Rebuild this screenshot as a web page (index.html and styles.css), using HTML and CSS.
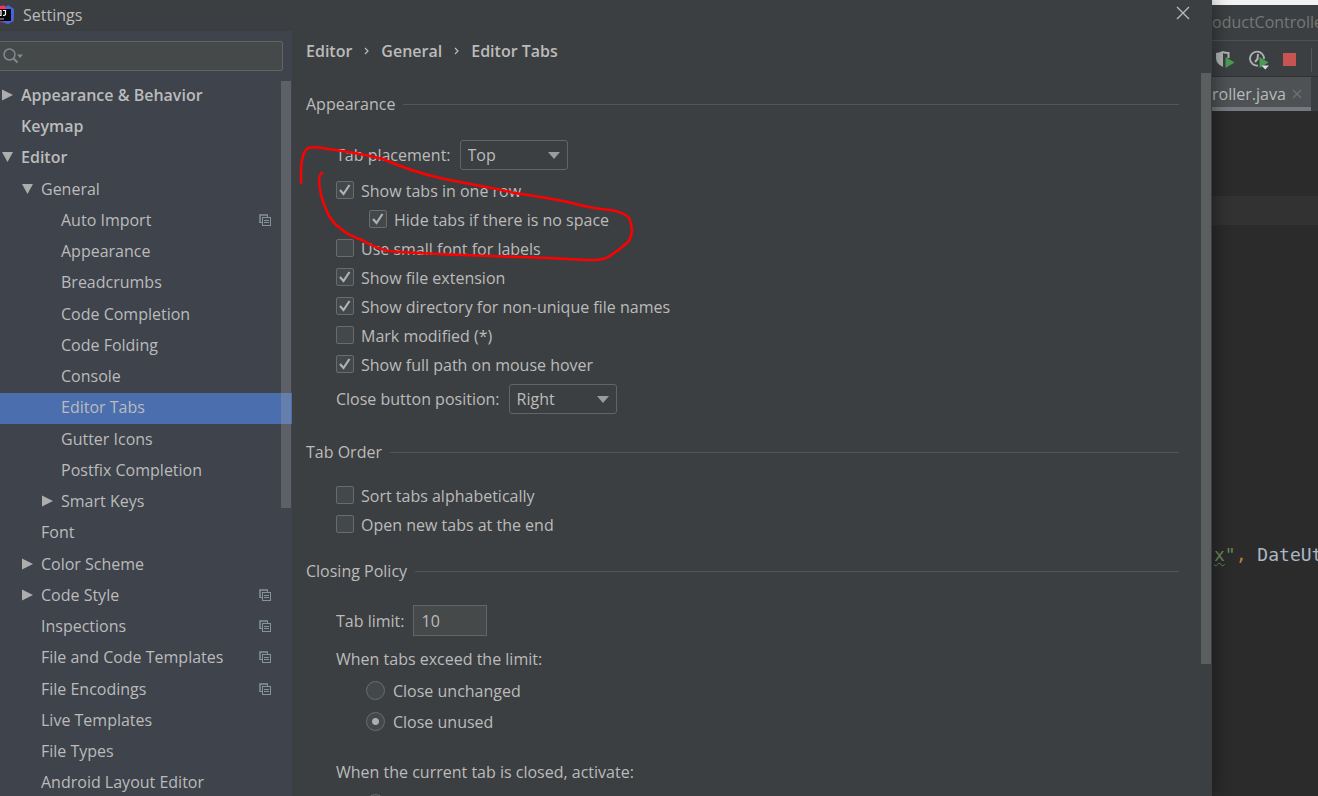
FILE: index.html
```html
<!DOCTYPE html>
<html lang="en">
<head>
  <meta charset="UTF-8">
  <meta name="viewport" content="width=device-width, initial-scale=1.0">
  <title>Settings</title>
  <link rel="stylesheet" href="styles.css">
</head>
<body>

  <!-- shared icon shapes -->
  <svg class="defs" width="0" height="0">
    <symbol id="copy" viewBox="0 0 12 12">
      <path d="M1 9V1H9" fill="none" stroke="#87939a" stroke-width="1.500"/>
      <path d="M1 8.500H3M8.500 1V3" fill="none" stroke="#87939a"/>
      <rect x="3.500" y="3.500" width="8" height="8" fill="#3e434c" stroke="#87939a"/>
      <path d="M5 6.500h5M5 8.500h5" stroke="#87939a"/>
    </symbol>
    <symbol id="right" viewBox="0 0 12 12"><path d="M1 0.500L12 6L1 11.500z" fill="#adadad"/></symbol>
    <symbol id="down" viewBox="0 0 12 12"><path d="M1 1H12L6.500 11z" fill="#adadad"/></symbol>
  </svg>

  <div class="dialog">
    <header class="titlebar">
      <svg class="logo" width="14" height="20" viewBox="0 0 14 20">
        <path d="M0 1L6 1L9 5L14 5L14 16L8 19L0 17z" fill="#7b3fa8"/>
        <path d="M6 2L8 0L14 4L13 16L8 19L4 17z" fill="#3b6be0"/>
        <path d="M0 1L4 0.500L7 4L0 5z" fill="#fe315d"/>
        <rect x="0" y="4" width="11" height="12" fill="#080808"/>
        <path d="M0 5.500H1.500M1 5.500V10.500M0 10.500H1.500M3 5.500H6M5.500 5V9Q5.500 10.500 3 10.500" fill="none" stroke="#fff" stroke-width="1.200"/>
        <path d="M0 14H4" stroke="#bbb"/>
      </svg>
      <span class="title">Settings</span>
      <button class="close" aria-label="Close">
        <svg width="14" height="14" viewBox="0 0 14 14"><path d="M1 1L13 13M13 1L1 13" stroke="#bbb" stroke-width="1.300"/></svg>
      </button>
    </header>

    <div class="columns">
      <aside class="sidebar">
        <div class="search">
          <svg width="20" height="16" viewBox="0 0 20 16">
            <circle cx="6.500" cy="6.500" r="5.500" fill="none" stroke="#7f8b91" stroke-width="1.500"/>
            <path d="M10.500 10.500L14.500 14.500" stroke="#7f8b91" stroke-width="2"/>
            <path d="M14 6.500H20L17 10z" fill="#7f8b91"/>
          </svg>
          <input type="text" aria-label="Search settings">
        </div>
        <ul class="tree">
          <li class="top"><svg class="arrow"><use href="#right"/></svg>Appearance &amp; Behavior</li>
          <li class="top">Keymap</li>
          <li class="top"><svg class="arrow"><use href="#down"/></svg>Editor</li>
          <li class="sub"><svg class="arrow"><use href="#down"/></svg>General</li>
          <li class="leaf">Auto Import<svg class="copy"><use href="#copy"/></svg></li>
          <li class="leaf">Appearance</li>
          <li class="leaf">Breadcrumbs</li>
          <li class="leaf">Code Completion</li>
          <li class="leaf">Code Folding</li>
          <li class="leaf">Console</li>
          <li class="leaf selected">Editor Tabs</li>
          <li class="leaf">Gutter Icons</li>
          <li class="leaf">Postfix Completion</li>
          <li class="leaf"><svg class="arrow"><use href="#right"/></svg>Smart Keys</li>
          <li class="sub">Font</li>
          <li class="sub"><svg class="arrow"><use href="#right"/></svg>Color Scheme</li>
          <li class="sub"><svg class="arrow"><use href="#right"/></svg>Code Style<svg class="copy"><use href="#copy"/></svg></li>
          <li class="sub">Inspections<svg class="copy"><use href="#copy"/></svg></li>
          <li class="sub">File and Code Templates<svg class="copy"><use href="#copy"/></svg></li>
          <li class="sub">File Encodings<svg class="copy"><use href="#copy"/></svg></li>
          <li class="sub">Live Templates</li>
          <li class="sub">File Types</li>
          <li class="sub">Android Layout Editor</li>
        </ul>
        <div class="thumb tree-thumb"></div>
      </aside>

      <main class="panel">
        <nav class="crumbs">
          <span>Editor</span>
          <svg width="5" height="8" viewBox="0 0 5 8"><path d="M1 1L4 4L1 7" fill="none" stroke="#bbb" stroke-width="1.200"/></svg>
          <span>General</span>
          <svg width="5" height="8" viewBox="0 0 5 8"><path d="M1 1L4 4L1 7" fill="none" stroke="#bbb" stroke-width="1.200"/></svg>
          <span>Editor Tabs</span>
        </nav>

        <section>
          <h2>Appearance</h2>
          <div class="group">
            <div class="field">
              <label for="placement">Tab placement:</label>
              <select id="placement"><option>Top</option><option>Bottom</option><option>Left</option></select>
            </div>
            <div class="checks">
              <label class="check"><input type="checkbox" checked>Show tabs in one row</label>
              <label class="check nested"><input type="checkbox" checked>Hide tabs if there is no space</label>
              <label class="check"><input type="checkbox">Use small font for labels</label>
              <label class="check"><input type="checkbox" checked>Show file extension</label>
              <label class="check"><input type="checkbox" checked>Show directory for non-unique file names</label>
              <label class="check"><input type="checkbox">Mark modified (*)</label>
              <label class="check"><input type="checkbox" checked>Show full path on mouse hover</label>
            </div>
            <div class="field">
              <label for="closePos">Close button position:</label>
              <select id="closePos"><option>Right</option><option>Left</option></select>
            </div>
          </div>
        </section>

        <section class="order">
          <h2>Tab Order</h2>
          <div class="group">
            <label class="check"><input type="checkbox">Sort tabs alphabetically</label>
            <label class="check"><input type="checkbox">Open new tabs at the end</label>
          </div>
        </section>

        <section class="closing">
          <h2>Closing Policy</h2>
          <div class="group">
            <div class="field">
              <label for="limit">Tab limit:</label>
              <input type="text" id="limit" value="10">
            </div>
            <p>When tabs exceed the limit:</p>
            <div class="radios">
              <label class="radio"><input type="radio" name="exceed">Close unchanged</label>
              <label class="radio"><input type="radio" name="exceed" checked>Close unused</label>
            </div>
            <p class="next">When the current tab is closed, activate:</p>
            <div class="radios">
              <label class="radio"><input type="radio" name="activate" aria-label="First choice"></label>
            </div>
          </div>
        </section>
        <div class="thumb panel-thumb"></div>

        <!-- red pen mark -->
        <svg class="pen" width="340" height="120" viewBox="0 0 340 120">
          <path d="M3 38V26Q3 16 6 8Q8 4 10 3Q18 1 30 4Q55 7 85 14C110 25 125 29 142 33C165 38 190 42 217 48Q250 53 270 57Q290 63 312 65Q326 67 331 73Q334 79 334 86Q333 93 330 97Q322 104 316 108Q308 116 290 115Q270 114 250 113L165 110Q115 108 90 106Q75 102 64 95Q50 90 43 84Q32 76 28 64Q25 58 23 50Q19 30 24 28" fill="none" stroke="#f00" stroke-width="2.500" stroke-linecap="round" stroke-linejoin="round"/>
        </svg>
      </main>
    </div>
  </div>

  <div class="ide">
    <div class="desktop"></div>
    <div class="ide-title">oductController</div>
    <div class="toolbar">
      <svg width="20" height="20" viewBox="0 0 20 20">
        <path d="M1 3Q5 2.500 8 1V17Q1 14 1 8z" fill="#afb1b3"/>
        <path d="M8 2Q10 3 13.500 3V8" fill="none" stroke="#afb1b3" stroke-width="2"/>
        <path d="M10.500 7L19.500 12.500L10.500 18z" fill="#499c54"/>
      </svg>
      <svg width="20" height="20" viewBox="0 0 20 20">
        <path d="M15 9A7 7 0 1 0 9 15.500" fill="none" stroke="#afb1b3" stroke-width="1.800"/>
        <path d="M9 4L8.500 9L6 12" fill="none" stroke="#afb1b3" stroke-width="2"/>
        <path d="M10.500 7L19.500 12.500L10.500 18z" fill="#499c54"/>
        <path d="M12.500 15.500H20L16.200 19.500z" fill="#ddd"/>
      </svg>
      <svg width="14" height="14" viewBox="0 0 14 14"><rect x="0" y="0" width="13" height="13" fill="#c75450"/></svg>
      <span class="divider"></span>
    </div>
    <div class="tabs">
      <div class="tab">roller.java
        <svg width="10" height="10" viewBox="0 0 10 10"><path d="M1 1L9 9M9 1L1 9" stroke="#6e7376" stroke-width="1.200"/></svg>
      </div>
    </div>
    <div class="code">
      <div class="caret-line"></div>
      <pre><span class="string"><span class="typo">x</span>"</span><span class="comma">,</span> DateUt</pre>
    </div>
  </div>

</body>
</html>
```
FILE: styles.css
```css
* {
  box-sizing: border-box;
}
body {
  margin: 0;
  height: 100vh;
  display: flex;
  overflow: hidden;
  background: #2b2b2b;
  color: #bbb;
  font-family: "Open Sans", "Noto Sans", sans-serif;
  font-size: 16px;
  line-height: 24px;
}
input, select, button {
  font: inherit;
  color: inherit;
  margin: 0;
}
.defs {
  position: absolute;
}

/* dialog */
.dialog {
  flex: 1;
  min-width: 0;
  display: flex;
  flex-direction: column;
  background: #3c3f41;
  position: relative;
  z-index: 1;
  box-shadow: 2px 0 16px rgba(0, 0, 0, 0.4);
}
.titlebar {
  height: 31px;
  display: flex;
  align-items: center;
  padding: 0 22px 2px 0;
}
.title {
  flex: 1;
  margin-left: 9px;
}
.close {
  padding: 0;
  border: 0;
  background: none;
  display: flex;
  margin-bottom: 3px;
}
.columns {
  flex: 1;
  min-height: 0;
  display: flex;
}
.thumb {
  position: absolute;
  right: 1px;
  width: 10px;
  background: rgba(166, 166, 166, 0.3);
}

/* sidebar */
.sidebar {
  width: 292px;
  flex-shrink: 0;
  padding-top: 10px;
  background: #3e434c;
  position: relative;
  overflow: hidden;
}
.search {
  height: 30px;
  margin-right: 9px;
  display: flex;
  align-items: center;
  padding-left: 3px;
  background: #45494a;
  border: 1px solid #646464;
  border-left: 0;
  border-radius: 0 3px 3px 0;
}
.search input {
  flex: 1;
  min-width: 0;
  border: 0;
  background: none;
  outline: none;
}
.tree {
  list-style: none;
  margin: 10px 0 0;
  padding: 0;
}
.tree li {
  height: 31px;
  display: flex;
  align-items: center;
  padding-right: 21px;
  padding-bottom: 3px;
  white-space: nowrap;
}
.tree li:nth-child(4n-1) {
  margin-bottom: 1px;
}
.tree .top {
  padding-left: 21px;
  font-weight: 600;
}
.tree .sub {
  padding-left: 41px;
}
.tree .leaf {
  padding-left: 61px;
}
.tree .selected {
  background: #4b6eaf;
}
.arrow {
  width: 12px;
  height: 12px;
  margin-left: -20px;
  margin-right: 8px;
}
.copy {
  width: 12px;
  height: 12px;
  margin-left: auto;
}
.tree-thumb {
  top: 50px;
  height: 427px;
}

/* settings panel */
.panel {
  flex: 1;
  min-width: 0;
  padding: 8px 33px 0 14px;
  position: relative;
  overflow: hidden;
}
.crumbs {
  display: flex;
  align-items: center;
  gap: 12px;
  font-weight: 600;
  margin-bottom: 29px;
}
h2 {
  display: flex;
  align-items: center;
  gap: 8px;
  margin: 0;
  font-size: 16px;
  font-weight: normal;
}
h2::after {
  content: "";
  flex: 1;
  height: 1px;
  background: #555;
}
section {
  margin-bottom: 26px;
}
.group {
  padding: 24px 0 0 30px;
}
.order {
  margin-bottom: 20px;
}
.order .group {
  padding-top: 17px;
}
.closing .group {
  padding-top: 22px;
}
.field {
  display: flex;
  align-items: center;
  gap: 9px;
}
select {
  width: 108px;
  height: 30px;
  padding: 0 7px;
  appearance: none;
  border: 1px solid #646464;
  border-radius: 3px;
  background: #3c3f41 url("data:image/svg+xml,%3Csvg xmlns='http://www.w3.org/2000/svg' width='12' height='7'%3E%3Cpath d='M0 0H12L6 7z' fill='%239a9da0'/%3E%3C/svg%3E") no-repeat right 7px center;
}
.checks {
  margin: 6px 0 5px;
}
.check, .radio {
  display: flex;
  align-items: center;
  height: 29px;
  gap: 7px;
}
.nested {
  margin-left: 33px;
}
.check input, .radio input {
  appearance: none;
  width: 18px;
  height: 18px;
  border: 1px solid #6b6b6b;
  border-radius: 2px;
  background: #43494a;
}
.check input {
  margin-bottom: 2px;
}
.check input:checked {
  background: #43494a url("data:image/svg+xml,%3Csvg xmlns='http://www.w3.org/2000/svg' width='16' height='16'%3E%3Cpath d='M3 8L6.500 12L12.500 3' fill='none' stroke='%23afb1b3' stroke-width='2.200'/%3E%3C/svg%3E") no-repeat center;
}
#limit {
  width: 74px;
  height: 31px;
  padding: 0 7px;
  border: 1px solid #646464;
  background: #45494a;
}
p {
  margin: 11px 0 4px;
}
.next {
  margin-top: 23px;
}
.radios {
  padding-left: 30px;
}
.radio {
  height: 31px;
  gap: 8px;
}
.radio input {
  width: 19px;
  height: 19px;
  border-radius: 50%;
}
.radio input:checked {
  background: radial-gradient(circle, #adadad 3px, #43494a 4px);
}
.panel-thumb {
  top: 42px;
  height: 591px;
}
.pen {
  position: absolute;
  left: 6px;
  top: 114px;
  pointer-events: none;
}

/* editor window behind the dialog */
.ide {
  width: 106px;
  flex-shrink: 0;
  overflow: hidden;
  white-space: nowrap;
}
.desktop {
  height: 5px;
  background: #f2f2f2;
}
.ide-title {
  height: 36px;
  line-height: 35px;
  background: #3c3f41;
  border-bottom: 1px solid #515151;
  color: #777;
}
.toolbar {
  height: 36px;
  display: flex;
  align-items: center;
  gap: 14px;
  padding: 2px 0 0 3px;
  background: #3c3f41;
  border-bottom: 1px solid #323232;
}
.divider {
  width: 1px;
  height: 24px;
  background: #555;
}
.tabs {
  height: 34px;
  display: flex;
  background: #3c3f41;
}
.tab {
  width: 99px;
  display: flex;
  align-items: center;
  gap: 6px;
  background: #4e5254;
  border-bottom: 4px solid #747a80;
  padding-top: 4px;
}
.code {
  padding-top: 85px;
}
.caret-line {
  height: 29px;
  background: #323232;
}
pre {
  margin: 318px 0 0 2px;
  font-family: "DejaVu Sans Mono", monospace;
  font-size: 18px;
  color: #a9b7c6;
}
.string {
  color: #6a8759;
}
.typo {
  text-decoration: underline wavy #5c8a5c 1px;
}
.comma {
  color: #cc7832;
}
```
